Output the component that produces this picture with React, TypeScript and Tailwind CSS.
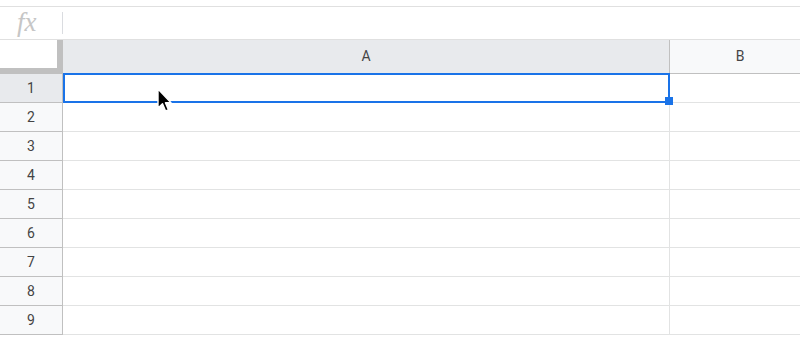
import React from "react";

const rows = [1, 2, 3, 4, 5, 6, 7, 8, 9];

function Cursor() {
  return (
    <svg
      className="absolute left-[156px] top-[88px]"
      width="16"
      height="26"
      viewBox="0 0 16 26"
    >
      <path
        d="M2 1 L2 20 L6.5 15.8 L9.6 23 L12.4 21.8 L9.4 14.8 L15 14.8 Z"
        fill="#000"
        stroke="#fff"
        strokeWidth="1.4"
        strokeLinejoin="round"
      />
    </svg>
  );
}

export default function App() {
  return (
    <div
      className="relative w-[800px] h-[339px] overflow-hidden bg-white"
      style={{ fontFamily: "Roboto, 'Liberation Sans', Arial, sans-serif" }}
    >
      <div className="h-[6px]" />
      {/* formula bar */}
      <div className="h-[34px] border-y border-[#e0e0e0] flex items-center">
        <span
          className="w-[62px] pl-[17px] text-[27px] italic text-[#c6c6c6] leading-none -mt-[2px]"
          style={{ fontFamily: "'Liberation Serif', 'DejaVu Serif', serif" }}
        >
          fx
        </span>
        <div className="w-px h-[22px] bg-[#dadce0]" />
      </div>

      {/* header row */}
      <div className="grid grid-cols-[63px_607px_1fr] h-[34px]">
        <div className="bg-white border-r-[6px] border-b-[6px] border-[#c0c0c0]" />
        <div className="bg-[#e8eaed] border-b border-r border-[#c0c0c0] flex items-center justify-center text-[14px] text-[#444]">
          A
        </div>
        <div className="bg-[#f8f9fa] border-b border-[#c0c0c0] flex items-center justify-center text-[14px] text-[#444] pl-[10px]">
          B
        </div>
      </div>

      {/* rows */}
      {rows.map((r) => (
        <div key={r} className="grid grid-cols-[63px_607px_1fr] h-[29px]">
          <div
            className={`border-r border-b border-[#c0c0c0] flex items-center justify-center text-[14px] text-[#444] ${
              r === 1 ? "bg-[#e8eaed]" : "bg-[#f8f9fa]"
            }`}
          >
            {r}
          </div>
          <div className="border-r border-b border-[#e2e3e3]" />
          <div className="border-b border-[#e2e3e3]" />
        </div>
      ))}

      {/* selection */}
      <div className="absolute left-[63px] top-[73px] w-[607px] h-[30px] border-2 border-[#1a73e8]" />
      <div className="absolute left-[665px] top-[97px] w-[8px] h-[8px] bg-[#1a73e8]" />

      <Cursor />
    </div>
  );
}
